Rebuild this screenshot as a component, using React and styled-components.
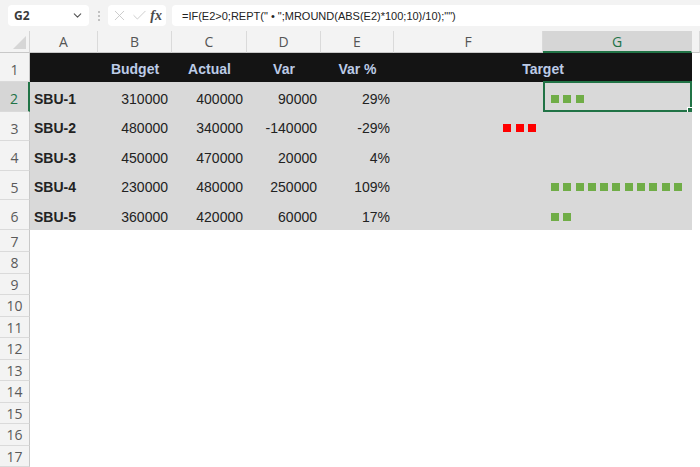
import React from "react";
import styled, { createGlobalStyle } from "styled-components";
import { X, Check, ChevronDown } from "lucide-react";

const GlobalStyle = createGlobalStyle`
  html, body {
    margin: 0;
    padding: 0;
    background: #ffffff;
    font-family: "Liberation Sans", Arial, sans-serif;
  }
  body {
    width: 700px;
    height: 467px;
    overflow: hidden;
  }
`;

const COLS = "30px 68px 74px 75px 74px 73px 149px 149px 1fr";

const Page = styled.div`
  width: 700px;
  height: 467px;
  display: flex;
  flex-direction: column;
  background: #fff;
  overflow: hidden;
`;

const FormulaBar = styled.div`
  height: 32px;
  display: flex;
  align-items: center;
  background: #f3f3f3;
  padding: 0 0 0 8px;
  box-sizing: border-box;
`;

const NameBox = styled.div`
  width: 81px;
  height: 21px;
  background: #fff;
  border-radius: 4px;
  display: flex;
  align-items: center;
  justify-content: space-between;
  padding: 0 5px 0 6px;
  box-sizing: border-box;
  font-size: 12px;
  font-weight: bold;
  color: #3a3a3a;
  font-family: "Open Sans", sans-serif;
`;

const Dots = styled.div`
  width: 19px;
  display: flex;
  flex-direction: column;
  align-items: center;
  gap: 2px;
  span {
    width: 2px;
    height: 2px;
    border-radius: 50%;
    background: #b0b0b0;
  }
`;

const ActionBox = styled.div`
  width: 58px;
  height: 21px;
  background: #fff;
  border-radius: 4px;
  display: flex;
  align-items: center;
  justify-content: space-between;
  padding: 0 4px 0 3px;
  box-sizing: border-box;
  color: #c4c4c4;
`;

const Fx = styled.span`
  font-family: "Liberation Serif", serif;
  font-style: italic;
  font-weight: bold;
  font-size: 14px;
  color: #4a4a4a;
`;

const FormulaInput = styled.div`
  flex: 1;
  height: 21px;
  margin-left: 6px;
  background: #fff;
  border-radius: 4px 0 0 4px;
  display: flex;
  align-items: center;
  padding-left: 10px;
  font-size: 11px;
  color: #222;
  white-space: pre;
`;

const Row = styled.div`
  display: grid;
  grid-template-columns: ${COLS};
  height: ${(p) => p.$h}px;
  flex-shrink: 0;
`;

const Corner = styled.div`
  background: #f3f3f3;
  border-right: 1px solid #d4d4d4;
  border-bottom: 1px solid #c8c8c8;
  position: relative;
  &::after {
    content: "";
    position: absolute;
    right: 3px;
    bottom: 3px;
    border-left: 13px solid transparent;
    border-bottom: 13px solid #d6d6d6;
  }
`;

const ColHead = styled.div`
  display: flex;
  align-items: center;
  justify-content: center;
  font-family: "Open Sans", sans-serif;
  font-size: 14px;
  background: ${(p) => (p.$active ? "#d6d6d6" : "#f3f3f3")};
  color: ${(p) => (p.$active ? "#217346" : "#555")};
  border-right: 1px solid ${(p) => (p.$active ? "#d6d6d6" : "#dadada")};
  border-bottom: ${(p) => (p.$active ? "2px solid #217346" : "1px solid #c8c8c8")};
  box-sizing: border-box;
`;

const RowHead = styled.div`
  display: flex;
  align-items: center;
  justify-content: center;
  padding-top: ${(p) => (p.$tall ? 4 : 1)}px;
  font-family: "Open Sans", sans-serif;
  font-size: 14px;
  background: ${(p) => (p.$active ? "#d6d6d6" : "#f3f3f3")};
  color: ${(p) => (p.$active ? "#217346" : "#5a5a5a")};
  border-right: ${(p) => (p.$active ? "2px solid #217346" : "1px solid #c8c8c8")};
  border-bottom: 1px solid #dadada;
  box-sizing: border-box;
`;

const Cell = styled.div`
  display: flex;
  align-items: center;
  justify-content: ${(p) => p.$align || "flex-start"};
  padding: 3px 4px 0 4px;
  box-sizing: border-box;
  font-size: 14px;
  font-weight: ${(p) => (p.$bold ? "bold" : "normal")};
  color: ${(p) => (p.$dark ? "#bccbe6" : "#222")};
  background: ${(p) => (p.$dark ? "#141414" : p.$fill ? "#d9d9d9" : "#fff")};
  grid-column: ${(p) => p.$span || "auto"};
  position: relative;
  white-space: nowrap;
`;

const Selection = styled.div`
  position: absolute;
  inset: -1px 0 0 0;
  border: 2px solid #217346;
  pointer-events: none;
  &::after {
    content: "";
    position: absolute;
    right: -4px;
    bottom: -4px;
    width: 5px;
    height: 5px;
    background: #217346;
    border: 1px solid #fff;
  }
`;

const Squares = styled.div`
  display: flex;
  gap: 4.3px;
  padding: ${(p) => (p.$right ? "0 3px 0 0" : "0 0 0 4px")};
`;

const Square = styled.span`
  width: 8px;
  height: 8px;
  background: ${(p) => (p.$red ? "#ff0000" : "#70ad47")};
`;

const cols = ["A", "B", "C", "D", "E", "F", "G", ""];

const data = [
  ["SBU-1", "310000", "400000", "90000", "29%", 0, 3],
  ["SBU-2", "480000", "340000", "-140000", "-29%", 3, 0],
  ["SBU-3", "450000", "470000", "20000", "4%", 0, 0],
  ["SBU-4", "230000", "480000", "250000", "109%", 0, 11],
  ["SBU-5", "360000", "420000", "60000", "17%", 0, 2],
];

function Bar({ n, red }) {
  return (
    <Squares $right={red}>
      {Array.from({ length: n }).map((_, i) => (
        <Square key={i} $red={red} />
      ))}
    </Squares>
  );
}

export default function App() {
  return (
    <Page>
      <GlobalStyle />
      <FormulaBar>
        <NameBox>
          G2
          <ChevronDown size={13} color="#555" strokeWidth={2} />
        </NameBox>
        <Dots>
          <span />
          <span />
          <span />
        </Dots>
        <ActionBox>
          <X size={17} strokeWidth={1.2} />
          <Check size={17} strokeWidth={1.2} />
          <Fx>fx</Fx>
        </ActionBox>
        <FormulaInput>{'=IF(E2>0;REPT(" • ";MROUND(ABS(E2)*100;10)/10);"")'}</FormulaInput>
      </FormulaBar>

      <Row $h={22}>
        <Corner />
        {cols.map((c, i) => (
          <ColHead key={i} $active={c === "G"}>
            {c}
          </ColHead>
        ))}
      </Row>

      <Row $h={29}>
        <RowHead $tall>1</RowHead>
        <Cell $dark />
        <Cell $dark $bold $align="center">Budget</Cell>
        <Cell $dark $bold $align="center">Actual</Cell>
        <Cell $dark $bold $align="center">Var</Cell>
        <Cell $dark $bold $align="center">Var %</Cell>
        <Cell $dark $bold $align="center" $span="span 2">Target</Cell>
        <Cell />
      </Row>

      {data.map((r, i) => (
        <Row $h={i % 2 === 0 ? 30 : 29} key={r[0]}>
          <RowHead $tall $active={i === 0}>{i + 2}</RowHead>
          <Cell $fill $bold>{r[0]}</Cell>
          <Cell $fill $align="flex-end">{r[1]}</Cell>
          <Cell $fill $align="flex-end">{r[2]}</Cell>
          <Cell $fill $align="flex-end">{r[3]}</Cell>
          <Cell $fill $align="flex-end">{r[4]}</Cell>
          <Cell $fill $align="flex-end">{r[5] > 0 && <Bar n={r[5]} red />}</Cell>
          <Cell $fill>
            {r[6] > 0 && <Bar n={r[6]} />}
            {i === 0 && <Selection />}
          </Cell>
          <Cell />
        </Row>
      ))}

      {Array.from({ length: 11 }).map((_, i) => (
        <Row $h={i === 0 ? 22 : 21.5} key={i}>
          <RowHead>{i + 7}</RowHead>
        </Row>
      ))}
    </Page>
  );
}
